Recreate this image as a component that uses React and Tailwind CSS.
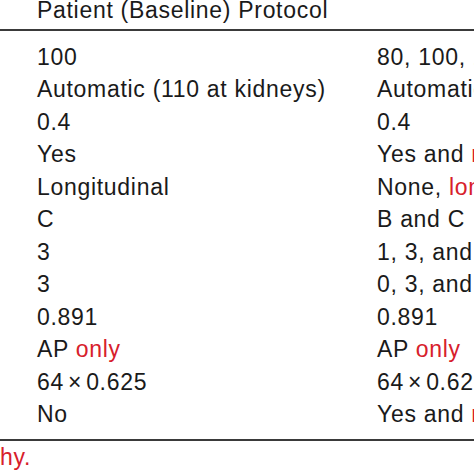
export default function App() {
  const Times = () => (
    <>64<span className="mx-[4px]">×</span>0.625</>
  );
  const rows = [
    ["100", <>80, 100, 120</>],
    ["Automatic (110 at kidneys)", <>Automatic (110 at kidneys)</>],
    ["0.4", <>0.4</>],
    ["Yes", <>Yes and <span className="text-[#d7202b]">reduced</span></>],
    ["Longitudinal", <>None, <span className="text-[#d7202b]">longitudinal</span></>],
    ["C", <>B and C</>],
    ["3", <>1, 3, and 5</>],
    ["3", <>0, 3, and 5</>],
    ["0.891", <>0.891</>],
    [<>AP <span className="text-[#d7202b]">only</span></>, <>AP <span className="text-[#d7202b]">only</span></>],
    [<Times />, <Times />],
    ["No", <>Yes and <span className="text-[#d7202b]">reduced</span></>],
  ];
  return (
    <div className="w-[474px] h-[474px] overflow-hidden bg-white text-[#1a1a1a] text-[23px] tracking-[0.7px]" style={{ fontFamily: '"Liberation Sans", Arial, sans-serif' }}>
      <div className="h-[29px] pl-[37px] leading-[20px] whitespace-nowrap">
        Patient (Baseline) Protocol
      </div>
      <div className="h-[2px] bg-[#3a3a3a]" />
      <div className="pt-[9.5px] pb-[8.5px]">
        {rows.map((r, i) => (
          <div key={i} className="flex h-[32.5px] leading-[32.5px] whitespace-nowrap">
            <div className="w-[377px] shrink-0 pl-[37px]">{r[0]}</div>
            <div className="shrink-0">{r[1]}</div>
          </div>
        ))}
      </div>
      <div className="h-[2px] bg-[#3a3a3a]" />
      <div className="pt-[3px] leading-[26px] text-[#d7202b]">hy.</div>
    </div>
  );
}
